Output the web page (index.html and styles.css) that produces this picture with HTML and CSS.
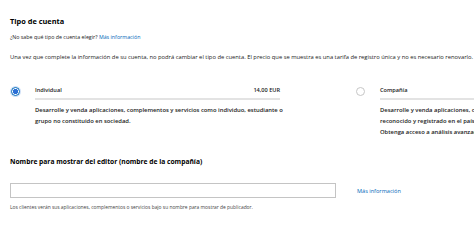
FILE: index.html
```html
<!DOCTYPE html>
<html lang="es">
<head>
  <meta charset="UTF-8" />
  <title>Tipo de cuenta</title>
  <link rel="stylesheet" href="styles.css">
</head>
<body>
  <div class="page">
    <section class="account-type">
      <h2 class="title">Tipo de cuenta</h2>
      <p class="hint">¿No sabe qué tipo de cuenta elegir? <a href="#">Más información</a></p>
      <p class="notice">Una vez que complete la información de su cuenta, no podrá cambiar el tipo de cuenta. El precio que se muestra es una tarifa de registro única y no es necesario renovarlo.</p>

      <div class="options">
        <div class="option">
          <span class="radio checked"></span>
          <div class="option-body">
            <div class="option-head">
              <span>Individual</span>
              <span>14,00 EUR</span>
            </div>
            <p>Desarrolle y venda aplicaciones, complementos y servicios como individuo, estudiante o grupo no constituido en sociedad.</p>
          </div>
        </div>

        <div class="option">
          <span class="radio"></span>
          <div class="option-body">
            <div class="option-head">
              <span>Compañía</span>
              <span>99,00 EUR</span>
            </div>
            <p>Desarrolle y venda aplicaciones, complementos y servicios como compañía o negocio reconocido y registrado en el país o región.</p>
            <p>Obtenga acceso a análisis avanzados y funciones adicionales.</p>
          </div>
        </div>
      </div>
    </section>

    <section class="publisher">
      <h2 class="subtitle">Nombre para mostrar del editor (nombre de la compañía)</h2>
      <div class="field-row">
        <input type="text" class="name-input" />
        <a href="#">Más información</a>
      </div>
      <p class="helper">Los clientes verán sus aplicaciones, complementos o servicios bajo su nombre para mostrar de publicador.</p>
    </section>
  </div>
</body>
</html>
```

FILE: styles.css
```css
body {
  margin: 0;
  background: #fff;
  font-family: "Open Sans", "Noto Sans", sans-serif;
  color: #1a1a1a;
  overflow: hidden;
}

.page {
  padding: 15px 10px 0 10px;
  width: 900px;
}

h2 {
  font-weight: 700;
  margin: 0;
  line-height: 12px;
  color: #000;
}

.title {
  font-size: 7.4px;
}

.subtitle {
  font-size: 6.7px;
}

a {
  color: #0067b8;
  text-decoration: none;
}

.hint {
  font-size: 5.3px;
  margin: 6px 0 0 0;
  line-height: 9px;
}

.notice {
  font-size: 5.8px;
  margin: 11px 0 0 0;
  line-height: 9px;
}

.options {
  display: flex;
  gap: 75px;
  margin-top: 23px;
}

.option {
  display: flex;
  width: 270px;
}

.radio {
  flex: none;
  width: 7px;
  height: 7px;
  border: 1px solid #c6c6c6;
  border-radius: 50%;
  margin: 2px 15px 0 1px;
}

.radio.checked {
  border-color: #0067b8;
  background: radial-gradient(circle, #2b6fd6 0 2.4px, #fff 2.9px);
  box-shadow: 0 0 0 1px #cfe0f7;
}

.option-body {
  flex: 1;
  font-size: 5.6px;
  font-weight: 600;
}

.option-head {
  display: flex;
  justify-content: space-between;
  line-height: 10px;
  padding-bottom: 3px;
  border-bottom: 2px solid #e3e3e3;
}

.option-body p {
  font-size: 5.85px;
  margin: 5px -8px 0 0;
  line-height: 11px;
}

.option-body p + p {
  margin-top: 0;
}

.publisher {
  margin-top: 18px;
}

.field-row {
  display: flex;
  align-items: center;
  gap: 21px;
  margin-top: 15px;
  font-size: 5.6px;
}

.name-input {
  width: 326px;
  height: 15px;
  box-sizing: border-box;
  border: 1px solid #c4c4c4;
  margin: 0;
  padding: 0;
}

.helper {
  font-size: 4.9px;
  color: #444;
  margin: 6px 0 0 0;
}
```
